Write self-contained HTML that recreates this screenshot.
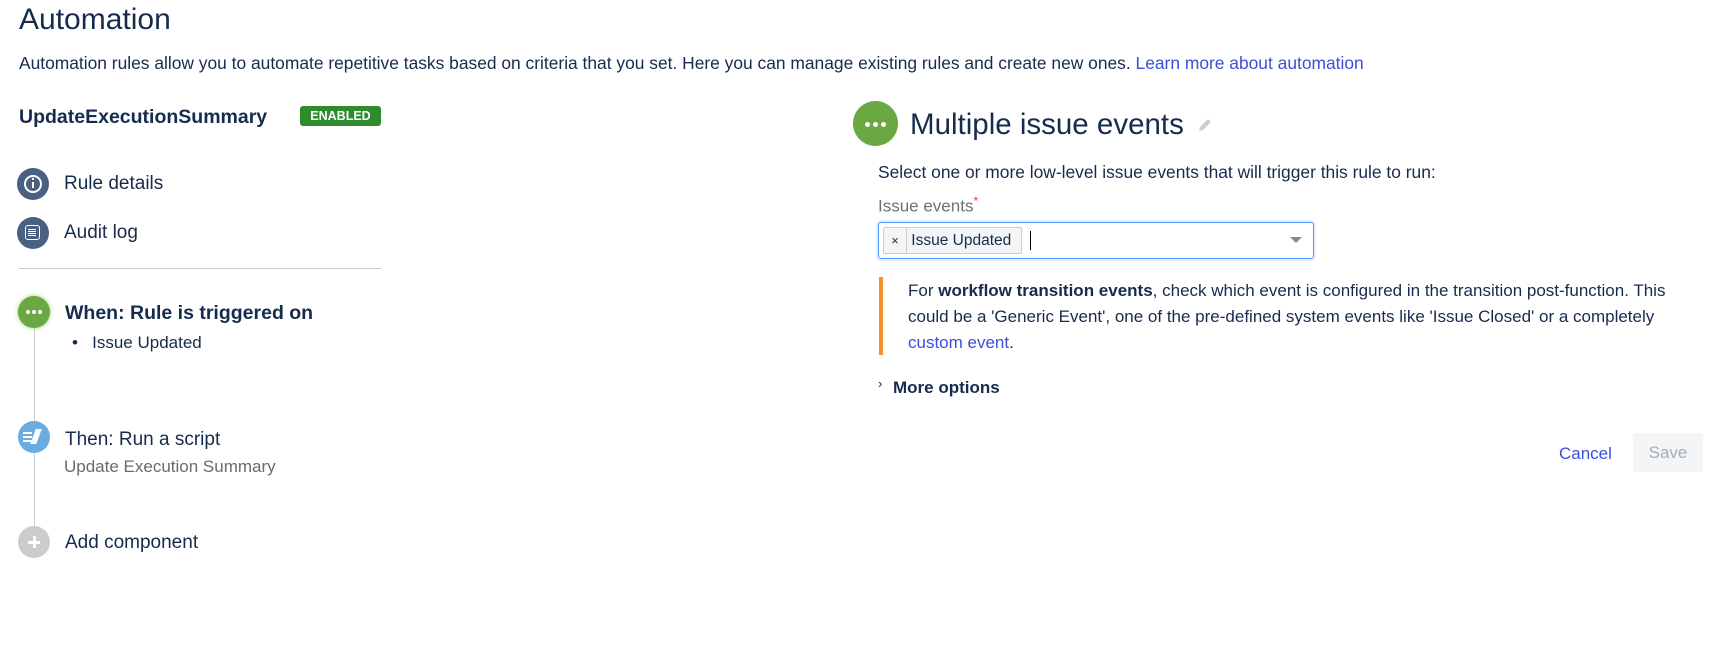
<!DOCTYPE html>
<html><head><meta charset="utf-8"><style>
body{margin:0;width:1734px;height:661px;background:#fff;font-family:"Liberation Sans",Arial,sans-serif;color:#172b4d;position:relative;overflow:hidden}
.a{position:absolute;white-space:nowrap}
.ic{position:absolute;border-radius:50%}
</style></head><body>
<div class="a" style="left:19px;top:3px;font-size:30px;color:#172b4d">Automation</div>
<div class="a" style="left:19px;top:53px;font-size:17.4px;color:#172b4d">Automation rules allow you to automate repetitive tasks based on criteria that you set. Here you can manage existing rules and create new ones. <span style="color:#3b4fd8">Learn more about automation</span></div>
<div class="a" style="left:19px;top:106px;font-size:19.5px;font-weight:bold;color:#172b4d">UpdateExecutionSummary</div>
<div class="a" style="left:300px;top:106px;width:81px;height:20px;background:#2e8b2e;border-radius:3px;color:#fff;font-size:12.5px;font-weight:bold;text-align:center;line-height:20px">ENABLED</div>

<div class="ic" style="left:17px;top:168px;width:32px;height:32px;background:#4a6080"></div>
<div class="ic" style="left:24px;top:175px;width:14px;height:14px;border:2px solid #fff"></div>
<div class="a" style="left:32px;top:178px;width:2px;height:2px;background:#fff"></div>
<div class="a" style="left:32px;top:182px;width:2px;height:6px;background:#fff"></div>
<div class="a" style="left:64px;top:173px;font-size:19px;color:#172b4d">Rule details</div>

<div class="ic" style="left:17px;top:217px;width:32px;height:32px;background:#4a6080"></div>
<div class="a" style="left:25px;top:225px;width:13px;height:13px;border:1.5px solid #fff;border-radius:3px"></div>
<div class="a" style="left:28px;top:229px;width:8px;height:1px;background:#fff;box-shadow:0 2px #fff,0 4px #fff,0 6px #fff"></div>
<div class="a" style="left:64px;top:222px;font-size:19px;color:#172b4d">Audit log</div>

<div class="a" style="left:19px;top:268px;width:362px;height:1px;background:#ccc"></div>

<div class="a" style="left:34px;top:328px;width:1px;height:220px;background:#ccc"></div>
<div class="ic" style="left:18px;top:296px;width:32px;height:32px;background:#6aa843;box-shadow:0 0 4px #9c6"></div>
<div class="a" style="left:26px;top:310px;width:4px;height:4px;border-radius:50%;background:#fff;box-shadow:6px 0 #fff,12px 0 #fff"></div>
<div class="a" style="left:65px;top:302px;font-size:19.5px;font-weight:bold;color:#172b4d">When: Rule is triggered on</div>
<div class="a" style="left:72px;top:333px;font-size:17px;color:#172b4d">•&nbsp;&nbsp; Issue Updated</div>

<div class="ic" style="left:18px;top:421px;width:32px;height:32px;background:#6aace0"></div>
<div class="a" style="left:23px;top:432px;width:9px;height:2px;background:#fff;box-shadow:0 4px #fff,0 8px #fff"></div>
<div class="a" style="left:33px;top:429px;width:6px;height:15px;background:#fff;transform:skewX(-20deg)"></div>
<div class="a" style="left:65px;top:429px;font-size:19px;color:#172b4d">Then: Run a script</div>
<div class="a" style="left:64px;top:457px;font-size:17px;color:#6b6b6b">Update Execution Summary</div>

<div class="ic" style="left:18px;top:526px;width:32px;height:32px;background:#ccc"></div>
<div class="a" style="left:28px;top:541px;width:12px;height:3px;background:#fff"></div>
<div class="a" style="left:32.5px;top:536px;width:3px;height:12px;background:#fff"></div>
<div class="a" style="left:65px;top:532px;font-size:19px;color:#172b4d">Add component</div>

<div class="ic" style="left:853px;top:101px;width:45px;height:45px;background:#6aa843"></div>
<div class="a" style="left:865px;top:122px;width:5px;height:5px;border-radius:50%;background:#fff;box-shadow:8px 0 #fff,16px 0 #fff"></div>
<div class="a" style="left:910px;top:108px;font-size:29.5px;color:#172b4d">Multiple issue events</div>
<svg class="a" style="left:1196px;top:116px" width="18" height="18" viewBox="0 0 18 18"><path d="M3 15 L4 11 L12 3 L15 6 L7 14 Z" fill="#ccc"/></svg>
<div class="a" style="left:878px;top:162px;font-size:17.4px;color:#172b4d">Select one or more low-level issue events that will trigger this rule to run:</div>
<div class="a" style="left:878px;top:194px;font-size:17px;color:#707070">Issue events<sup style="color:#d04437;font-size:12px">*</sup></div>
<div class="a" style="left:878px;top:222px;width:434px;height:35px;border:1px solid #4c9aff;border-radius:3px;box-shadow:0 0 0 2px #e6f0ff"></div>
<div class="a" style="left:883px;top:227px;width:137px;height:25px;border:1px solid #ccc;background:#f4f5f7;border-radius:2px;font-size:15.5px;line-height:25px;color:#172b4d"><span style="display:inline-block;width:22px;border-right:1px solid #ccc;text-align:center;font-size:13px">×</span>&nbsp;Issue Updated</div>
<div class="a" style="left:1030px;top:231px;width:1px;height:19px;background:#000"></div>
<div class="a" style="left:1290px;top:237px;width:0;height:0;border-left:6px solid transparent;border-right:6px solid transparent;border-top:6px solid #888"></div>

<div class="a" style="left:879px;top:277px;width:4px;height:78px;background:#f0902a"></div>
<div class="a" style="left:908px;top:278px;font-size:17px;line-height:26px;color:#172b4d">For <b>workflow transition events</b>, check which event is configured in the transition post-function. This<br>could be a 'Generic Event', one of the pre-defined system events like 'Issue Closed' or a completely<br><span style="color:#3b4fd8">custom event</span>.</div>
<div class="a" style="left:878px;top:376px;font-size:13px;color:#172b4d">›</div>
<div class="a" style="left:893px;top:378px;font-size:17px;font-weight:bold;color:#172b4d">More options</div>

<div class="a" style="left:1559px;top:444px;font-size:17px;color:#3b4fd8">Cancel</div>
<div class="a" style="left:1633px;top:433px;width:70px;height:39px;background:#f4f5f7;border-radius:3px;color:#a5adba;font-size:17px;line-height:39px;text-align:center">Save</div>
</body></html>
